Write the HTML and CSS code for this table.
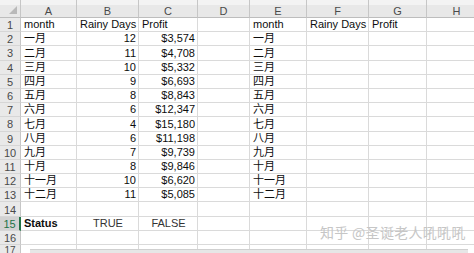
FILE: index.html
```html
<!DOCTYPE html>
<html>
<head>
<meta charset="utf-8">
<link rel="stylesheet" href="styles.css">
</head>
<body>
<div class="sheet">
  <div class="grid">
    <div class="hd corner"><span class="tri"></span></div>
    <div class="hd col">A</div><div class="hd col">B</div><div class="hd col">C</div><div class="hd col">D</div><div class="hd col">E</div><div class="hd col">F</div><div class="hd col">G</div><div class="hd col">H</div>

    <div class="hd row">1</div><div class="c">month</div><div class="c">Rainy Days</div><div class="c">Profit</div><div class="c"></div><div class="c">month</div><div class="c">Rainy Days</div><div class="c">Profit</div><div class="c"></div>
    <div class="hd row">2</div><div class="c">一月</div><div class="c r">12</div><div class="c r">$3,574</div><div class="c"></div><div class="c">一月</div><div class="c"></div><div class="c"></div><div class="c"></div>
    <div class="hd row">3</div><div class="c">二月</div><div class="c r">11</div><div class="c r">$4,708</div><div class="c"></div><div class="c">二月</div><div class="c"></div><div class="c"></div><div class="c"></div>
    <div class="hd row">4</div><div class="c">三月</div><div class="c r">10</div><div class="c r">$5,332</div><div class="c"></div><div class="c">三月</div><div class="c"></div><div class="c"></div><div class="c"></div>
    <div class="hd row">5</div><div class="c">四月</div><div class="c r">9</div><div class="c r">$6,693</div><div class="c"></div><div class="c">四月</div><div class="c"></div><div class="c"></div><div class="c"></div>
    <div class="hd row">6</div><div class="c">五月</div><div class="c r">8</div><div class="c r">$8,843</div><div class="c"></div><div class="c">五月</div><div class="c"></div><div class="c"></div><div class="c"></div>
    <div class="hd row">7</div><div class="c">六月</div><div class="c r">6</div><div class="c r">$12,347</div><div class="c"></div><div class="c">六月</div><div class="c"></div><div class="c"></div><div class="c"></div>
    <div class="hd row">8</div><div class="c">七月</div><div class="c r">4</div><div class="c r">$15,180</div><div class="c"></div><div class="c">七月</div><div class="c"></div><div class="c"></div><div class="c"></div>
    <div class="hd row">9</div><div class="c">八月</div><div class="c r">6</div><div class="c r">$11,198</div><div class="c"></div><div class="c">八月</div><div class="c"></div><div class="c"></div><div class="c"></div>
    <div class="hd row">10</div><div class="c">九月</div><div class="c r">7</div><div class="c r">$9,739</div><div class="c"></div><div class="c">九月</div><div class="c"></div><div class="c"></div><div class="c"></div>
    <div class="hd row">11</div><div class="c">十月</div><div class="c r">8</div><div class="c r">$9,846</div><div class="c"></div><div class="c">十月</div><div class="c"></div><div class="c"></div><div class="c"></div>
    <div class="hd row">12</div><div class="c">十一月</div><div class="c r">10</div><div class="c r">$6,620</div><div class="c"></div><div class="c">十一月</div><div class="c"></div><div class="c"></div><div class="c"></div>
    <div class="hd row">13</div><div class="c">十二月</div><div class="c r">11</div><div class="c r">$5,085</div><div class="c"></div><div class="c">十二月</div><div class="c"></div><div class="c"></div><div class="c"></div>
    <div class="hd row">14</div><div class="c"></div><div class="c"></div><div class="c"></div><div class="c"></div><div class="c"></div><div class="c"></div><div class="c"></div><div class="c"></div>
    <div class="hd row sel">15</div><div class="c b">Status</div><div class="c m">TRUE</div><div class="c m">FALSE</div><div class="c"></div><div class="c"></div><div class="c"></div><div class="c"></div><div class="c"></div>
    <div class="hd row">16</div><div class="c"></div><div class="c"></div><div class="c"></div><div class="c"></div><div class="c"></div><div class="c"></div><div class="c"></div><div class="c"></div>
    <div class="hd row last">17</div><div class="c"></div><div class="c"></div><div class="c"></div><div class="c"></div><div class="c"></div><div class="c"></div><div class="c"></div><div class="c"></div>
  </div>
  <div class="scroll"></div>
  <div class="watermark">知乎 @圣诞老人吼吼吼</div>
</div>
</body>
</html>
```
FILE: styles.css
```css
html, body {
  margin: 0;
  padding: 0;
  background: #ffffff;
  overflow: hidden;
}
.sheet {
  position: relative;
  width: 474px;
  height: 253px;
  overflow: hidden;
  font-family: "Liberation Sans", "Noto Sans CJK SC", sans-serif;
  font-size: 11px;
  color: #111;
}
.grid {
  display: grid;
  grid-template-columns: 21px 56px 62px 59px 52px 57px 62px 58px 60px;
  grid-template-rows: 18px repeat(17, 14.2px);
}
.hd {
  background: #e9e9e9;
  color: #4a4a4a;
  box-sizing: border-box;
  display: flex;
  align-items: center;
  justify-content: center;
}
.col {
  border-right: 1px solid #c6c6c6;
  border-bottom: 1px solid #bdbdbd;
  padding-top: 5px;
  background: linear-gradient(#f3f3f3 0, #f3f3f3 5px, #e8e8e8 5px);
}
.corner {
  position: relative;
  border-right: 1px solid #c6c6c6;
  border-bottom: 1px solid #bdbdbd;
  background: linear-gradient(#f3f3f3 0, #f3f3f3 5px, #e8e8e8 5px);
}
.tri {
  position: absolute;
  right: 3px;
  bottom: 3px;
  width: 0;
  height: 0;
  border-left: 8px solid transparent;
  border-bottom: 8px solid #b9b9b9;
}
.row {
  border-right: 1px solid #c6c6c6;
  border-bottom: 1px solid #d6d6d6;
  padding-top: 1px;
}
.row.last {
  align-items: flex-start;
  padding-top: 0;
  font-size: 10px;
}
.row.sel {
  background: #d2d2d2;
  color: #217346;
  border-right: 2px solid #217346;
}
.c {
  box-sizing: border-box;
  border-right: 1px solid #dadada;
  border-bottom: 1px solid #dadada;
  padding: 0 2px 0 3px;
  display: flex;
  align-items: flex-end;
  padding-bottom: 1px;
  white-space: nowrap;
  overflow: visible;
  line-height: 12px;
  color: #0d0d0d;
}
.c.r {
  justify-content: flex-end;
}
.c.m {
  justify-content: center;
  color: #333;
}
.c.b {
  font-weight: bold;
}
.scroll {
  position: absolute;
  left: 30px;
  right: 6px;
  top: 249px;
  height: 4px;
  background: #e6e6e6;
  border-top: 1px solid #d0d0d0;
}
.watermark {
  position: absolute;
  left: 320px;
  top: 222px;
  font-family: "Noto Sans CJK SC", sans-serif;
  font-size: 14px;
  color: #c6c6c6;
  letter-spacing: 0.3px;
}
```
